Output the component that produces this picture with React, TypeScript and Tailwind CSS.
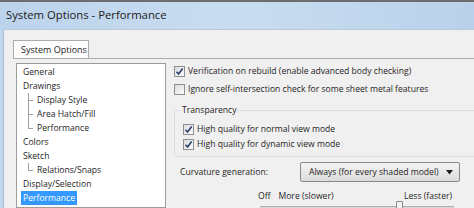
import React from 'react';

const font = { fontFamily: '"Open Sans", "Noto Sans", Arial, sans-serif' };

function Check({ checked }: { checked: boolean }) {
  return (
    <span className="w-[11px] h-[11px] shrink-0 border border-[#8e8f8f] bg-gradient-to-br from-[#dcdcdc] to-[#fbfbfb] flex items-center justify-center">
      {checked && (
        <svg width="9" height="9" viewBox="0 0 9 9">
          <path d="M1.5 4.8 L3.6 7 L7.6 1.6" fill="none" stroke="#2a3f6c" strokeWidth="1.6" />
        </svg>
      )}
    </span>
  );
}

function TreeItem({ label, child, last, selected }: { label: string; child?: boolean; last?: boolean; selected?: boolean }) {
  return (
    <div className="h-[14px] flex items-center relative">
      {child && (
        <>
          <span className={`absolute left-[11px] top-0 w-px bg-[#a0a0a0] ${last ? 'h-[7px]' : 'h-[14px]'}`} />
          <span className="absolute left-[11px] top-[7px] w-[5px] h-px bg-[#a0a0a0]" />
        </>
      )}
      <span
        className={`${child ? 'ml-[18px]' : 'ml-[4px]'} px-[2px] leading-[14px] ${selected ? 'bg-[#3399ff] text-white' : 'text-[#1e1e1e]'}`}
      >
        {label}
      </span>
    </div>
  );
}

export default function App() {
  return (
    <div className="w-[474px] h-[208px] overflow-hidden bg-[#c3d8ee] flex flex-col" style={font}>
      <div className="h-[2px] bg-[#6d6d6d]" />
      <div className="h-[27px] shrink-0 flex items-center pl-[6px] bg-gradient-to-r from-[#bcd3ec] via-[#c9ddf1] to-[#b9d1ea] text-[11.3px] text-[#1b1b1b]">
        System Options - Performance
      </div>
      <div className="flex flex-1 min-h-0">
        <div className="w-[4px] shrink-0 bg-[#c3d8ee] border-r border-[#a7bdd5]" />
        <div className="flex-1 bg-[#f0f0f0] border-t border-[#b9c9da] pt-[10px] pl-[9px] flex flex-col text-[8.6px]">
          <div className="flex">
            <div className="h-[19px] w-[76px] pl-[7px] flex items-center border border-b-0 border-[#acacac] bg-[#fcfcfc] text-[9px] text-[#1e1e1e]">
              System Options
            </div>
          </div>
          <div className="flex-1 flex border-t border-[#acacac] -mt-px pt-[4px] pl-[3px]">
            <div className="w-[150px] shrink-0 bg-white border border-[#9c9c9c] pt-px">
              <TreeItem label="General" />
              <TreeItem label="Drawings" />
              <TreeItem label="Display Style" child />
              <TreeItem label="Area Hatch/Fill" child />
              <TreeItem label="Performance" child last />
              <TreeItem label="Colors" />
              <TreeItem label="Sketch" />
              <TreeItem label="Relations/Snaps" child last />
              <TreeItem label="Display/Selection" />
              <TreeItem label="Performance" selected />
            </div>
            <div className="flex-1 flex flex-col pl-[8px] -mt-px text-[#1e1e1e]">
              <div className="h-[18px] flex items-center gap-[3px]">
                <Check checked />
                <span>Verification on rebuild (enable advanced body checking)</span>
              </div>
              <div className="h-[18px] flex items-center gap-[3px]">
                <Check checked={false} />
                <span>Ignore self-intersection check for some sheet metal features</span>
              </div>
              <div className="relative mt-[12px] -mr-[20px] border border-[#d5dfe5] rounded-[3px] pt-[11px] pb-[4px] pl-[8px]">
                <span className="absolute left-[5px] -top-[8px] px-[2px] bg-[#f0f0f0] leading-[14px]">Transparency</span>
                <div className="h-[15px] flex items-center gap-[3px]">
                  <Check checked />
                  <span>High quality for normal view mode</span>
                </div>
                <div className="h-[15px] flex items-center gap-[3px]">
                  <Check checked />
                  <span>High quality for dynamic view mode</span>
                </div>
              </div>
              <div className="mt-[5px] h-[20px] flex items-center">
                <span className="pl-[6px] w-[126px]">Curvature generation:</span>
                <div className="w-[160px] h-[20px] border border-[#8a8a8a] rounded-[2px] bg-gradient-to-b from-[#f4f4f4] to-[#dcdcdc] flex items-center pl-[8px] pr-[6px]">
                  <span className="flex-1">Always (for every shaded model)</span>
                  <svg width="7" height="5" viewBox="0 0 7 5">
                    <path d="M0 0 H7 L3.5 4.5 Z" fill="#1e1e1e" />
                  </svg>
                </div>
              </div>
              <div className="mt-[7px] h-[14px] flex items-center pl-[84px] pr-[22px]">
                <span>Off</span>
                <span className="ml-[8px]">More (slower)</span>
                <span className="ml-auto">Less (faster)</span>
              </div>
              <div className="relative ml-[86px] mr-[20px] mt-[3px] h-[2px] bg-[#d6d6d6] border-t border-[#b0b0b0]">
                <span className="absolute left-[136px] -top-[6px] w-[7px] h-[10px] border border-[#8a8a8a] bg-[#f2f2f2] rounded-[1px]" />
              </div>
            </div>
          </div>
        </div>
      </div>
    </div>
  );
}
